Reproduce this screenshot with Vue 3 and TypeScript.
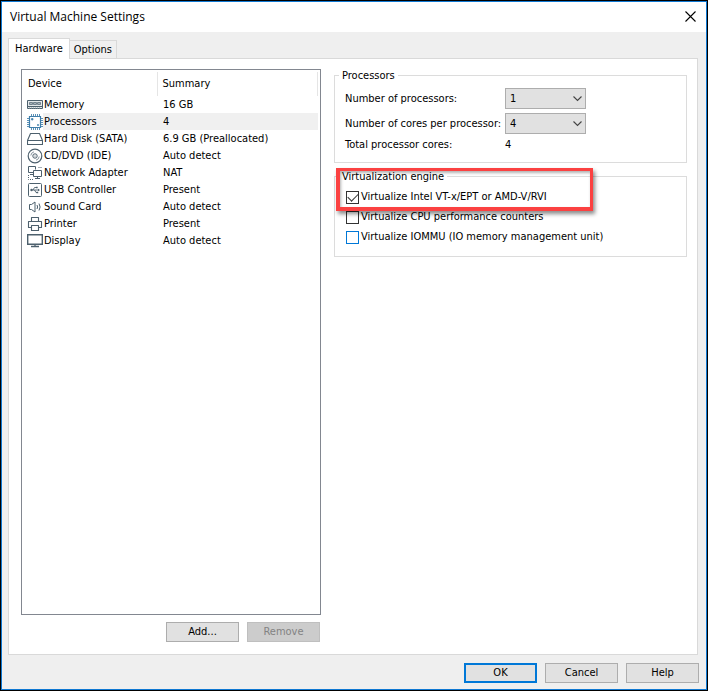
<script setup lang="ts">
import { computed, ref } from 'vue'

interface Device {
  id: string
  name: string
  summary: string
}

const devices: Device[] = [
  { id: 'memory', name: 'Memory', summary: '16 GB' },
  { id: 'cpu', name: 'Processors', summary: '4' },
  { id: 'disk', name: 'Hard Disk (SATA)', summary: '6.9 GB (Preallocated)' },
  { id: 'cd', name: 'CD/DVD (IDE)', summary: 'Auto detect' },
  { id: 'network', name: 'Network Adapter', summary: 'NAT' },
  { id: 'usb', name: 'USB Controller', summary: 'Present' },
  { id: 'sound', name: 'Sound Card', summary: 'Auto detect' },
  { id: 'printer', name: 'Printer', summary: 'Present' },
  { id: 'display', name: 'Display', summary: 'Auto detect' },
]

const selected = ref('cpu')
const processors = ref(1)
const cores = ref(4)
const total = computed(() => processors.value * cores.value)
const counts = [1, 2, 4, 8]

const vtx = ref(true)
const counters = ref(false)
const iommu = ref(false)
</script>

<template>
  <main class="window">
    <header class="titlebar">
      <h1>Virtual Machine Settings</h1>
      <button class="close" type="button" aria-label="Close">
        <svg width="11" height="11" viewBox="0 0 11 11"><path d="M.5 .5l10 10M10.5 .5l-10 10" stroke="#000" stroke-width="1.1" fill="none" /></svg>
      </button>
    </header>

    <div class="body">
      <nav class="tabs" role="tablist">
        <button class="tab active" type="button" role="tab" aria-selected="true">Hardware</button>
        <button class="tab" type="button" role="tab" aria-selected="false">Options</button>
      </nav>

      <section class="panel">
        <div class="left">
          <div class="list">
            <table>
              <thead>
                <tr><th class="device">Device</th><th>Summary</th></tr>
              </thead>
              <tbody>
                <tr v-for="d in devices" :key="d.id" :class="{ selected: d.id === selected }" @click="selected = d.id">
                  <td>
                    <div class="name">
                      <svg class="icon" width="16" height="16" viewBox="0 0 16 16" fill="none" stroke="#4d606d" aria-hidden="true">
                        <template v-if="d.id === 'memory'">
                          <path d="M.5 3.5h15v8H.5z" fill="#e4e8ea" />
                          <path d="M2.500 5.500h3v2h-3zM6.500 5.500h3v2h-3zM10.500 5.500h3v2h-3z" fill="#a9b3b9" stroke="#71818c" />
                          <path d="M1 9.500h14" />
                          <path d="M2 11h12" stroke="#8b98a1" stroke-dasharray="1 1" />
                        </template>
                        <template v-else-if="d.id === 'cpu'">
                          <g stroke="#3f7eaa">
                            <path d="M2.500 2.500h11v11h-11z" fill="#fff" stroke-width="1.200" />
                            <path d="M4.500 0v2M6.500 0v2M8.500 0v2M10.500 0v2M12.500 0v2M4.500 14v2M6.500 14v2M8.500 14v2M10.500 14v2M12.500 14v2M0 4.500h2M0 6.500h2M0 8.500h2M0 10.500h2M0 12.500h2M14 4.500h2M14 6.500h2M14 8.500h2M14 10.500h2M14 12.500h2" stroke-opacity=".85" />
                            <path d="M4.500 4.500h1.500v1.500H4.500zM10.500 10.500h1v1h-1z" fill="#3f7eaa" stroke-width=".7" />
                          </g>
                        </template>
                        <template v-else-if="d.id === 'disk'">
                          <path d="M3.500 2.500h9l3 7v4H.5v-4zM.5 9.500h15" stroke-linejoin="round" stroke-width="1.100" />
                        </template>
                        <template v-else-if="d.id === 'cd'">
                          <circle cx="8" cy="8" r="6.800" stroke-width="1.200" />
                          <circle cx="8" cy="8" r="2.200" />
                          <circle cx="8" cy="8" r=".6" fill="#4d606d" stroke="none" />
                          <path d="M3.800 7.500A4.300 4.300 0 0 1 7 3.800M12.200 8.500A4.300 4.300 0 0 1 9 12.200" stroke="#8b98a1" />
                        </template>
                        <template v-else-if="d.id === 'network'">
                          <path d="M6 7.500H1.500v-6h7v3M3 9.500h3" />
                          <path d="M6.500 5.500h8v6h-8zM10.500 11.500v2M8 13.500h5" />
                          <path d="M1.500 10v4.500h5M14.500 2.500h-4" stroke-dasharray="1 1" />
                        </template>
                        <template v-else-if="d.id === 'usb'">
                          <rect x="1.500" y="1.500" width="13" height="13" rx="1" />
                          <path d="M4 8h8M6 8l1.500-2.500h2M7.500 8L9 10.500h1.500" stroke-width=".9" />
                          <circle cx="4.500" cy="8" r="1.200" fill="#4d606d" stroke="none" />
                          <path d="M9 4.700h1.700v1.600H9zM9.500 9.700h1.700v1.600H9.500zM11 6.700L13 8l-2 1.300z" fill="#4d606d" stroke="none" />
                        </template>
                        <template v-else-if="d.id === 'sound'">
                          <path d="M2.500 5.500h2L8 3v10l-3.500-2.500h-2z" />
                          <path d="M10 6q1.200 2 0 4M12 4.500q2.200 3.500 0 7" />
                        </template>
                        <template v-else-if="d.id === 'printer'">
                          <path d="M4.500 5.500v-4h7v4M4 11.500H1.500v-6h13v6H12M4.500 9.500h7v5h-7z" stroke-width="1.100" stroke-linejoin="round" />
                        </template>
                        <template v-else>
                          <path d="M.7 1.700h14.600v9.600H.7z" stroke-width="1.400" />
                          <path d="M8 11.500v2M4 13.500h8" stroke-width="1.300" />
                        </template>
                      </svg>
                      <span>{{ d.name }}</span>
                    </div>
                  </td>
                  <td class="summary">{{ d.summary }}</td>
                </tr>
              </tbody>
            </table>
          </div>
          <div class="actions">
            <button class="btn" type="button">Add...</button>
            <button class="btn" type="button" disabled>Remove</button>
          </div>
        </div>

        <div class="right">
          <fieldset class="processors">
            <legend>Processors</legend>
            <div class="grid">
              <label for="processors">Number of processors:</label>
              <div class="combo">
                <select id="processors" v-model="processors">
                  <option v-for="n in counts" :key="n" :value="n">{{ n }}</option>
                </select>
                <svg width="9" height="6" viewBox="0 0 9 6"><path d="M.5 .5l4 4 4-4" fill="none" stroke="#444" stroke-width="1.100" /></svg>
              </div>
              <label for="cores">Number of cores per processor:</label>
              <div class="combo">
                <select id="cores" v-model="cores">
                  <option v-for="n in counts" :key="n" :value="n">{{ n }}</option>
                </select>
                <svg width="9" height="6" viewBox="0 0 9 6"><path d="M.5 .5l4 4 4-4" fill="none" stroke="#444" stroke-width="1.100" /></svg>
              </div>
              <span>Total processor cores:</span>
              <output for="processors cores">{{ total }}</output>
            </div>
          </fieldset>

          <fieldset class="engine">
            <legend>Virtualization engine</legend>
            <label class="check"><input v-model="vtx" type="checkbox" />Virtualize Intel VT-x/EPT or AMD-V/RVI</label>
            <label class="check"><input v-model="counters" type="checkbox" />Virtualize CPU performance counters</label>
            <label class="check"><input v-model="iommu" class="hot" type="checkbox" />Virtualize IOMMU (IO memory management unit)</label>
            <div class="highlight"></div>
          </fieldset>
        </div>
      </section>

      <footer>
        <button class="btn default" type="button">OK</button>
        <button class="btn" type="button">Cancel</button>
        <button class="btn" type="button">Help</button>
      </footer>
    </div>
  </main>
</template>

<style>
body {
  margin: 0;
}
</style>

<style scoped>
* {
  box-sizing: border-box;
}
.window {
  display: flex;
  flex-direction: column;
  min-height: 100vh;
  border: 1px solid #000;
  background: #efefef;
  color: #000;
  font: 11px/14px Tahoma, "DejaVu Sans Condensed", "DejaVu Sans", sans-serif;
  font-stretch: condensed;
  white-space: nowrap;
  box-shadow: inset 0 0 0 1px #0f78d2;
  padding: 1px;
}
button,
select {
  font: inherit;
  color: inherit;
}
.titlebar {
  display: flex;
  align-items: center;
  justify-content: space-between;
  height: 30px;
  padding: 0 10px 2px 8px;
  background: #fff;
}
h1 {
  margin: 0;
  padding-top: 2px;
  font: 12px/16px "Segoe UI", "Open Sans", sans-serif;
}
.close {
  display: flex;
  padding: 0;
  border: 0;
  background: none;
}
.body {
  flex: 1;
  display: flex;
  flex-direction: column;
  padding: 6px 7px 6px 6px;
}
.tabs {
  display: flex;
  align-items: flex-end;
}
.tab {
  height: 18px;
  padding: 0 4px;
  border: 1px solid #d9d9d9;
  border-bottom: 0;
  border-left: 0;
  background: #f0f0f0;
}
.tab.active {
  height: 21px;
  margin-bottom: -1px;
  padding: 0 6px 1px;
  border-left: 1px solid #d9d9d9;
  background: #fff;
  z-index: 1;
}
.panel {
  flex: 1;
  display: flex;
  gap: 13px;
  margin-right: 1px;
  padding: 10px 10px 12px 12px;
  border: 1px solid #d9d9d9;
  background: #fff;
}
.left {
  flex: 0 0 300px;
  display: flex;
  flex-direction: column;
  gap: 7px;
}
.list {
  flex: 1;
  padding: 2px 2px 2px 1px;
  border: 1px solid #828790;
}
table {
  width: 100%;
  border-collapse: collapse;
  table-layout: fixed;
}
th {
  height: 24px;
  padding: 0 0 0 5px;
  border-right: 1px solid #e5e5e5;
  font-weight: 400;
  text-align: left;
}
.device {
  width: 134px;
}
td {
  height: 17px;
  padding: 0;
}
.name {
  display: flex;
  align-items: center;
  height: 17px;
  padding-left: 4px;
}
.name span {
  flex: 1;
  padding-left: 1px;
  line-height: 17px;
}
.icon {
  flex: none;
}
.summary {
  padding-left: 6px;
}
.selected .name span,
.selected .summary {
  background: #f0f0f0;
}
.actions,
footer {
  display: flex;
  justify-content: flex-end;
  gap: 8px;
}
.actions {
  padding-right: 1px;
}
footer {
  padding-top: 8px;
}
.btn {
  width: 73px;
  height: 20px;
  padding: 0;
  border: 1px solid #adadad;
  background: #e1e1e1;
}
.btn:disabled {
  border-color: #bfbfbf;
  background: #ccc;
  color: #838383;
}
.btn.default {
  border: 2px solid #0078d7;
}
.right {
  flex: 1;
  min-width: 0;
}
fieldset {
  position: relative;
  min-width: 0;
  margin: 0;
  padding: 6px 10px 10px;
  border: 1px solid #dcdcdc;
}
legend {
  margin-left: -6px;
  padding: 0 3px;
  line-height: 13px;
}
.grid {
  display: grid;
  grid-template-columns: 160px 81px;
  row-gap: 4px;
  align-items: center;
}
.combo {
  display: grid;
  align-items: center;
}
.combo select,
.combo svg {
  grid-area: 1 / 1;
}
.combo svg {
  justify-self: end;
  margin-right: 4px;
  pointer-events: none;
}
select {
  appearance: none;
  width: 100%;
  height: 21px;
  padding: 0 4px;
  border: 1px solid #adadad;
  border-radius: 0;
  background: #e1e1e1;
}
.engine {
  margin-top: 7px;
  padding: 4px 10px 9px 11px;
}
.engine legend {
  margin-left: -7px;
}
.check {
  display: flex;
  align-items: center;
  gap: 2px;
  height: 20px;
}
input {
  appearance: none;
  flex: none;
  width: 13px;
  height: 13px;
  margin: 0;
  border: 1px solid #333;
  background: #fff;
}
input:checked::before {
  content: "";
  display: block;
  width: 9px;
  height: 5px;
  margin: 2px 1px;
  border: solid #333;
  border-width: 0 0 1px 1px;
  transform: rotate(-45deg);
}
input.hot {
  border: 1px solid #0078d7;
}
input:checked::before {
  margin-top: 1px;
}
.highlight {
  position: absolute;
  top: -15px;
  left: 1px;
  width: 257px;
  height: 43px;
  border: 4px solid #fb4141;
  border-width: 3px 3px 4px 4px;
  box-shadow: 2px 3px 4px rgba(0, 0, 0, 0.45), inset 1px 2px 3px rgba(0, 0, 0, 0.3);
  pointer-events: none;
}
</style>
